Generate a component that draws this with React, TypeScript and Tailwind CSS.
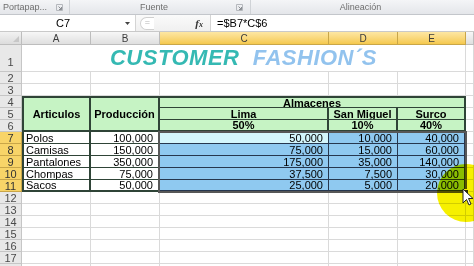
import React from "react";

const RS = [
  "row-start-1", "row-start-2", "row-start-3", "row-start-4", "row-start-5",
  "row-start-6", "row-start-7", "row-start-8", "row-start-9", "row-start-10",
  "row-start-11", "row-start-12", "row-start-13", "row-start-14", "row-start-15",
  "row-start-16", "row-start-17", "row-start-18", "row-start-19",
];
const CS = ["col-start-1", "col-start-2", "col-start-3", "col-start-4", "col-start-5", "col-start-6", "col-start-7"];

type Cell = { r: number; c: number; span?: string; cls: string; text?: React.ReactNode };

const GRID = "border-r border-b border-[#dadada] bg-white";
const HDR_GREY =
  "bg-linear-to-b from-[#f7f7f7] to-[#dfdfdf] border-r border-b border-[#bdbdbd] flex items-center justify-center text-[10px] text-[#3c3c3c]";
const HDR_ORANGE =
  "bg-linear-to-b from-[#fde7a3] to-[#f5c94c] border-r border-b border-[#c9a648] flex items-center justify-center text-[10px] text-[#3c3c3c]";
const RH_GREY =
  "bg-[#e8e8e8] border-r border-b border-[#c6c6c6] flex items-center justify-center text-[11px] text-[#4a4a4a] leading-[12px]";
const RH_ORANGE =
  "bg-[#f8d468] border-r border-b border-[#c9a648] flex items-center justify-center text-[11px] text-[#333] leading-[12px]";

const DK = "border-[#2f4437]";
const NV = "border-[#26374f]";
const GREEN = "bg-[#c6f3c4]";
const HEAD_TXT = "flex items-center justify-center text-[11px] font-bold text-black leading-[12px]";
const NUM = "flex items-center justify-end pr-[5px] text-[11px] text-black leading-[12px]";

function Launcher() {
  return (
    <svg width="7" height="7" viewBox="0 0 7 7" className="shrink-0">
      <path d="M0.5 0.5H6.5V6.5H0.5Z" fill="none" stroke="#b5b8bd" strokeWidth="1" />
      <path d="M2.5 2.5L5.5 5.5M5.5 3V5.5H3" fill="none" stroke="#8a8d92" strokeWidth="1" />
    </svg>
  );
}

export default function App() {
  const cells: Cell[] = [];

  // column headers
  cells.push({
    r: 1,
    c: 1,
    cls: "bg-linear-to-b from-[#f2f2f2] to-[#dcdcdc] border-r border-b border-[#bdbdbd] flex items-end justify-end p-[2px]",
    text: (
      <svg width="6" height="6" viewBox="0 0 6 6">
        <path d="M6 0V6H0Z" fill="#c7c7c7" />
      </svg>
    ),
  });
  cells.push({ r: 1, c: 2, cls: HDR_GREY, text: "A" });
  cells.push({ r: 1, c: 3, cls: HDR_GREY, text: "B" });
  cells.push({ r: 1, c: 4, cls: HDR_ORANGE, text: "C" });
  cells.push({ r: 1, c: 5, cls: HDR_ORANGE, text: "D" });
  cells.push({ r: 1, c: 6, cls: HDR_ORANGE, text: "E" });
  cells.push({ r: 1, c: 7, cls: HDR_GREY });

  // row headers
  for (let n = 1; n <= 18; n++) {
    const sel = n >= 7 && n <= 11;
    cells.push({
      r: n + 1,
      c: 1,
      cls: (sel ? RH_ORANGE : RH_GREY) + (n === 1 ? " !items-end pb-[3px]" : ""),
      text: n <= 17 ? n : undefined,
    });
  }

  // row 1 title
  cells.push({
    r: 2,
    c: 2,
    span: "col-span-5",
    cls: "border-r border-b border-[#dadada] bg-white flex items-center justify-center pb-[1px]",
    text: (
      <span className="text-[22px] font-bold italic leading-none whitespace-pre tracking-[0.5px]">
        <span className="text-[#35b9b3]">CUSTOMER</span>
        <span>{"  "}</span>
        <span className="text-[#92c3ee]">FASHION´S</span>
      </span>
    ),
  });
  cells.push({ r: 2, c: 7, cls: GRID });

  // rows 2,3
  for (const r of [3, 4]) for (let c = 2; c <= 7; c++) cells.push({ r, c, cls: GRID });

  // rows 4-6 header block
  cells.push({
    r: 5,
    c: 2,
    span: "row-span-3",
    cls: `${GREEN} border-l-2 border-t-2 border-r-2 border-b-2 ${DK} ${HEAD_TXT}`,
    text: "Articulos",
  });
  cells.push({
    r: 5,
    c: 3,
    span: "row-span-3",
    cls: `${GREEN} border-t-2 border-r-2 border-b-2 ${DK} ${HEAD_TXT}`,
    text: "Producción",
  });
  cells.push({
    r: 5,
    c: 4,
    span: "col-span-3",
    cls: `${GREEN} border-t-2 border-r-2 border-b ${DK} ${HEAD_TXT}`,
    text: "Almacenes",
  });
  cells.push({ r: 5, c: 7, cls: GRID });
  const r5 = ["Lima", "San Miguel", "Surco"];
  r5.forEach((t, i) =>
    cells.push({ r: 6, c: 4 + i, cls: `${GREEN} border-r-2 border-b ${DK} ${HEAD_TXT}`, text: t })
  );
  cells.push({ r: 6, c: 7, cls: GRID });
  const r6 = ["50%", "10%", "40%"];
  r6.forEach((t, i) =>
    cells.push({ r: 7, c: 4 + i, cls: `${GREEN} border-r-2 border-b-2 ${DK} ${HEAD_TXT}`, text: t })
  );
  cells.push({ r: 7, c: 7, cls: GRID });

  // data rows
  const data: [string, string, string, string, string][] = [
    ["Polos", "100,000", "50,000", "10,000", "40,000"],
    ["Camisas", "150,000", "75,000", "15,000", "60,000"],
    ["Pantalones", "350,000", "175,000", "35,000", "140,000"],
    ["Chompas", "75,000", "37,500", "7,500", "30,000"],
    ["Sacos", "50,000", "25,000", "5,000", "20,000"],
  ];
  data.forEach((row, i) => {
    const r = 8 + i;
    const last = i === data.length - 1;
    const bb = last ? "border-b-2" : "border-b";
    cells.push({
      r,
      c: 2,
      cls: `bg-white border-l-2 border-r-2 ${bb} ${DK} flex items-center pl-[2px] text-[11px] text-black leading-[12px]`,
      text: row[0],
    });
    cells.push({ r, c: 3, cls: `bg-white border-r-2 ${bb} ${DK} ${NUM}`, text: row[1] });
    cells.push({
      r,
      c: 4,
      cls: `${i === 0 ? "bg-[#d3f6fc]" : "bg-[#8fc9f0]"} border-r ${bb} ${NV} ${NUM}`,
      text: row[2],
    });
    cells.push({ r, c: 5, cls: `bg-[#8fc9f0] border-r ${bb} ${NV} ${NUM}`, text: row[3] });
    cells.push({ r, c: 6, cls: `bg-[#8fc9f0] border-r-2 ${bb} ${NV} ${NUM}`, text: row[4] });
    cells.push({ r, c: 7, cls: GRID });
  });

  // empty rows 12-18
  for (let r = 13; r <= 19; r++) for (let c = 2; c <= 7; c++) cells.push({ r, c, cls: GRID });

  return (
    <div className="relative w-[474px] h-[266px] overflow-hidden bg-white font-['Liberation_Sans',Arial,sans-serif]">
      {/* ribbon group labels */}
      <div className="h-[15px] flex bg-linear-to-b from-[#f4f5f7] to-[#e4e6ea] border-b border-[#c3c6cb] text-[9px] text-[#6e6e6e] leading-none">
        <div className="w-[70px] flex items-center pl-[3px] pr-[6px] border-r border-[#d0d3d7]">
          <span>Portapap...</span>
          <span className="ml-auto">
            <Launcher />
          </span>
        </div>
        <div className="w-[181px] flex items-center pr-[7px] border-r border-[#d0d3d7]">
          <span className="flex-1 text-center pl-[2px]">Fuente</span>
          <Launcher />
        </div>
        <div className="flex-1 flex items-center justify-center pr-[4px]">
          <span>Alineación</span>
        </div>
      </div>

      {/* formula bar */}
      <div className="h-[17px] flex items-stretch bg-white border-b border-[#c9c9c9]">
        <div className="w-[136px] flex items-center border-r border-[#d4d4d4]">
          <span className="flex-1 text-center text-[11px] text-black pl-[1px]">C7</span>
          <svg width="5" height="3" viewBox="0 0 5 3" className="mr-[5px]">
            <path d="M0 0H5L2.5 3Z" fill="#444" />
          </svg>
        </div>
        <div className="w-[75px] flex items-center border-r border-[#d4d4d4] bg-linear-to-b from-[#fafafa] to-[#f0f0f0]">
          <div className="ml-[4px] h-[13px] w-[14px] rounded-l-full border border-r-0 border-[#d0d0d0] bg-white flex items-center justify-center text-[9px] text-[#b5b5b5]">
            =
          </div>
          <span className="ml-auto mr-[7px] text-[11px] italic font-bold text-[#333] font-['Liberation_Serif',serif]">
            f<span className="text-[8px]">x</span>
          </span>
        </div>
        <div className="flex-1 flex items-center pl-[6px] text-[11px] text-black">=$B7*C$6</div>
      </div>

      {/* sheet grid */}
      <div className="grid grid-cols-[22px_69px_69px_169px_69px_68px_1fr] grid-rows-[13px_27px_repeat(17,12px)]">
        {cells.map((cell, i) => (
          <div key={i} className={`${RS[cell.r - 1]} ${CS[cell.c - 1]} ${cell.span ?? ""} ${cell.cls} overflow-hidden whitespace-nowrap`}>
            {cell.text}
          </div>
        ))}
        {/* selection border C7:E11 */}
        <div className="col-start-4 col-span-3 row-start-8 row-span-5 relative z-10 -ml-[2px] -mt-[1px] -mr-[1px] -mb-[1px] border-2 border-[#575757] pointer-events-none">
          <div className="absolute -right-[4px] -bottom-[4px] w-[6px] h-[6px] bg-[#333] border border-white" />
        </div>
      </div>

      {/* presenter highlight circle */}
      <div className="absolute left-[437px] top-[164px] w-[58px] h-[58px] rounded-full bg-[#f6f000] mix-blend-multiply z-20 pointer-events-none" />
      {/* mouse cursor */}
      <svg className="absolute left-[462px] top-[188px] z-30" width="12" height="18" viewBox="0 0 12 18">
        <path d="M1 1L1 15L4.5 11.5L7 17L9 16L6.5 10.5L11 10.5Z" fill="#fff" stroke="#222" strokeWidth="1" strokeLinejoin="round" />
      </svg>
    </div>
  );
}
